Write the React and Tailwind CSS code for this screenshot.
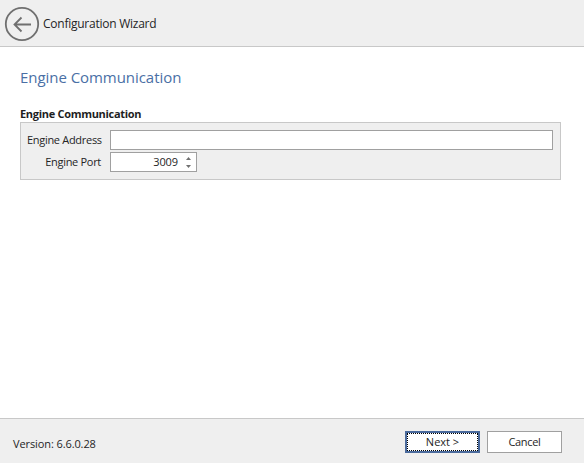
function BackIcon() {
  return (
    <svg width="36" height="36" viewBox="0 0 36 36" fill="none" stroke="#6f6f6f" className="shrink-0">
      <circle cx="18" cy="18" r="16.2" strokeWidth="1.8" />
      <path d="M27 18.5H10.5M17.5 11.5l-7 7 7 7" strokeWidth="1.8" />
    </svg>
  );
}

export default function App() {
  return (
    <div className="flex h-[463px] w-[584px] flex-col bg-white font-['Open_Sans','Noto_Sans',sans-serif] text-[11px] tracking-[-0.3px] text-[#252526]">
      <header className="flex h-[47px] shrink-0 items-center gap-[3px] border-b border-[#c8c8c8] bg-[#efefef] pl-[4px] pt-[1px]">
        <BackIcon />
        <span className="text-[12px] tracking-[-0.25px]">Configuration Wizard</span>
      </header>

      <main className="flex-1 px-[20px] pt-[20px]">
        <h1 className="text-[15px] leading-[21px] tracking-[-0.05px] text-[#4a6fa5]">Engine Communication</h1>
        <h2 className="mt-[18px] text-[11px] leading-[15px] font-bold tracking-[-0.3px] text-[#1e1e1e]">Engine Communication</h2>
        <section className="mt-[1px] flex h-[58px] w-[541px] flex-col gap-[2px] border border-[#c8c8c8] bg-[#efefef] pt-[7px] pr-[7px] pl-[6px]">
          <div className="flex items-center gap-[9px]">
            <label className="w-[74px] text-right whitespace-nowrap">Engine Address</label>
            <div className="h-[20px] flex-1 border border-[#a0a0a0] bg-white" />
          </div>
          <div className="flex items-center gap-[9px]">
            <label className="w-[74px] text-right whitespace-nowrap">Engine Port</label>
            <div className="flex h-[20px] w-[87px] items-center justify-end border border-[#a0a0a0] bg-white pr-[4px]">
              <span className="tracking-[-0.1px]">3009</span>
              <span className="ml-[7px] flex w-[7px] flex-col items-center gap-[5px]">
                <svg width="5" height="3" viewBox="0 0 5 3" fill="#707070"><path d="M2.5 0L5 3H0z" /></svg>
                <svg width="5" height="3" viewBox="0 0 5 3" fill="#707070"><path d="M0 0h5L2.5 3z" /></svg>
              </span>
            </div>
          </div>
        </section>
      </main>

      <footer className="flex h-[45px] shrink-0 items-center justify-between border-t border-[#c8c8c8] bg-[#efefef] pr-[22px] pl-[13px]">
        <span className="pt-[7px] tracking-[-0.1px]">Version: 6.6.0.28</span>
        <div className="flex items-center gap-[7px] pt-[2px]">
          <button className="h-[22px] w-[75px] border-2 border-[#4a6a9c] bg-white tracking-normal outline-1 -outline-offset-3 outline-black outline-dotted">Next &gt;</button>
          <button className="h-[22px] w-[75px] border border-[#a0a0a0] bg-white">Cancel</button>
        </div>
      </footer>
    </div>
  );
}
